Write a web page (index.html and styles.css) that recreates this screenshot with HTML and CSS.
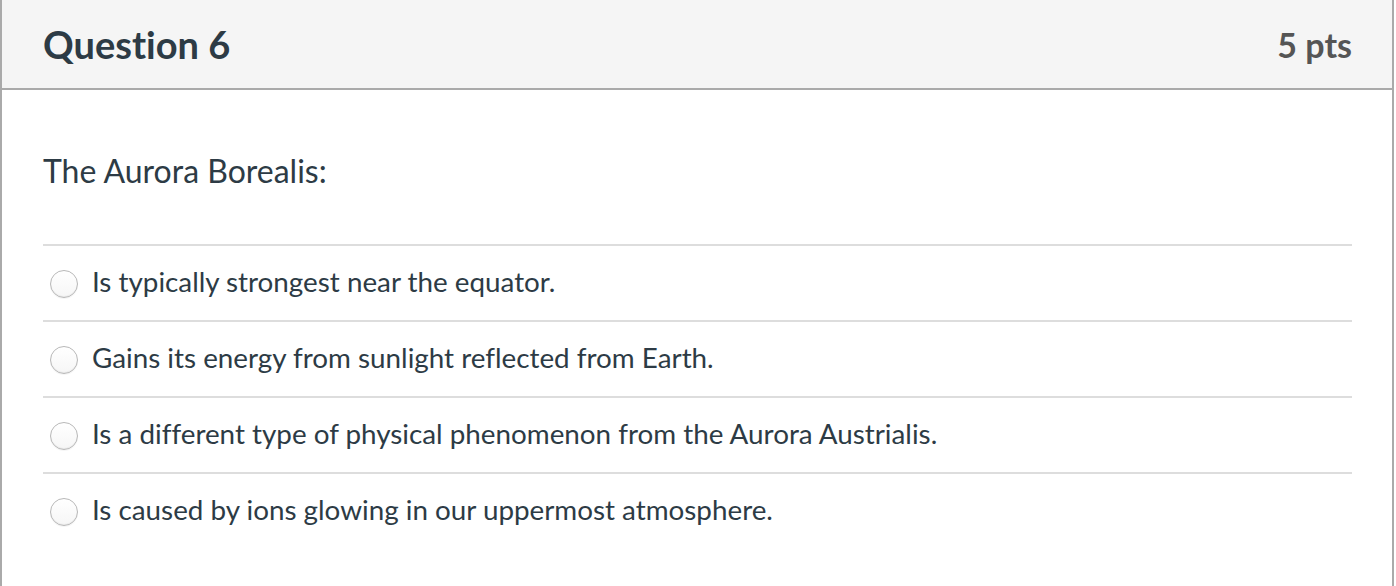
FILE: index.html
```html
<!DOCTYPE html>
<html>
<head>
<meta charset="utf-8">
<link rel="stylesheet" href="styles.css">
</head>
<body>
<div class="card">
  <div class="header">
    <h2 class="title">Question 6</h2>
    <div class="pts">5 pts</div>
  </div>
  <div class="content">
    <p class="question">The Aurora Borealis:</p>
    <div class="answers">
      <label class="answer"><span class="radio"></span><span class="text">Is typically strongest near the equator.</span></label>
      <label class="answer"><span class="radio"></span><span class="text">Gains its energy from sunlight reflected from Earth.</span></label>
      <label class="answer"><span class="radio"></span><span class="text">Is a different type of physical phenomenon from the Aurora Austrialis.</span></label>
      <label class="answer last"><span class="radio"></span><span class="text">Is caused by ions glowing in our uppermost atmosphere.</span></label>
    </div>
  </div>
</div>
</body>
</html>
```
FILE: styles.css
```css
html, body {
  margin: 0;
  padding: 0;
  background: #fff;
}
body {
  font-family: Lato, "Noto Sans", sans-serif;
  color: #2d3b45;
  overflow: hidden;
  font-variant-ligatures: none;
}
.card {
  width: 1390px;
  height: 586px;
  border-left: 2px solid #aaaaaa;
  border-right: 2px solid #aaaaaa;
  box-sizing: content-box;
}
.header {
  height: 88px;
  background: #f5f5f5;
  border-bottom: 2px solid #aaaaaa;
  display: flex;
  align-items: center;
  justify-content: space-between;
  padding: 0 40px 0 41px;
}
.title {
  margin: 0;
  font-size: 38px;
  font-weight: 700;
  color: #2d3b45;
}
.pts {
  font-size: 34px;
  font-weight: 700;
  color: #555555;
}
.content {
  padding: 0 40px 0 41px;
}
.question {
  margin: 0;
  padding-top: 63px;
  height: 88px;
  font-size: 32px;
  line-height: 36px;
  box-sizing: border-box;
}
.answers {
  margin-top: 66px;
  border-top: 2px solid #dddddd;
}
.answer {
  display: flex;
  align-items: center;
  height: 74px;
  border-bottom: 2px solid #dddddd;
  padding-left: 7px;
}
.answer.last {
  border-bottom: none;
}
.radio {
  width: 26px;
  height: 26px;
  border-radius: 50%;
  border: 1px solid #b8b8b8;
  background: linear-gradient(#ffffff, #f6f6f6);
  box-shadow: inset 0 -1px 1px rgba(0,0,0,0.06), 0 1px 0 rgba(0,0,0,0.04);
  margin-right: 14px;
  flex: none;
  margin-top: 2px;
}
.text {
  font-size: 27.8px;
  margin-top: -4px;
}
```
